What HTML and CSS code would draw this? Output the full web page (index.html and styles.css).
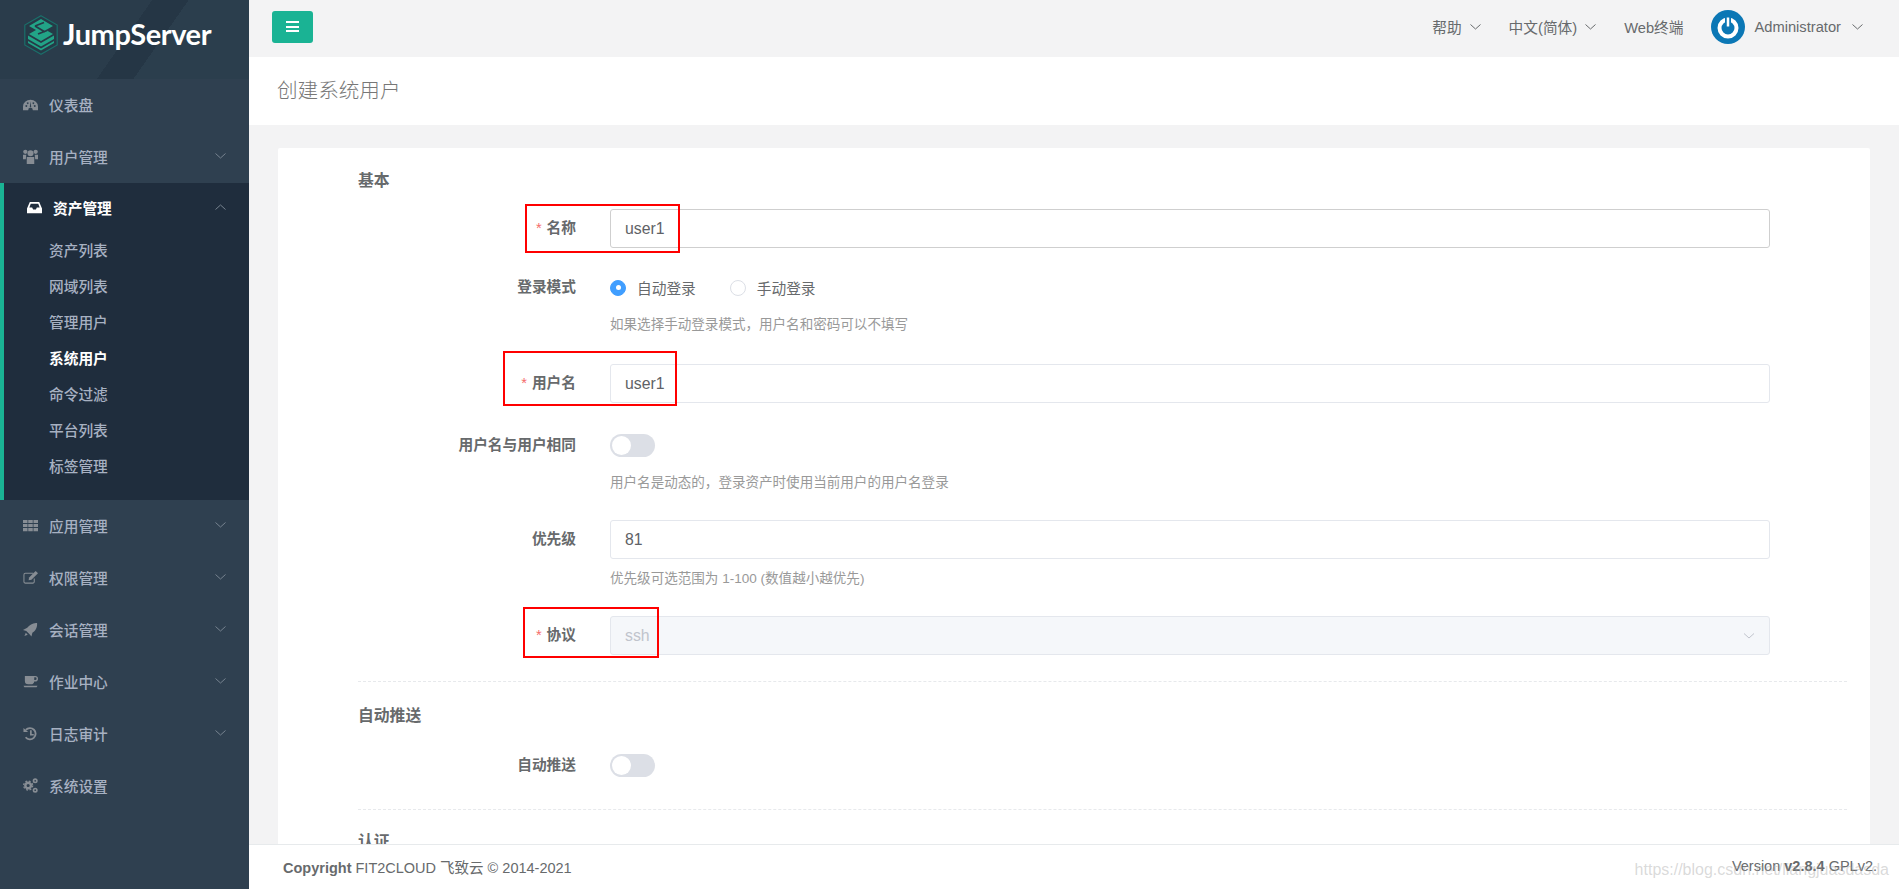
FILE: index.html
```html
<!DOCTYPE html>
<html lang="zh-CN">
<head>
  <meta charset="UTF-8">
  <title>创建系统用户</title>
  <link rel="stylesheet" href="styles.css">
</head>
<body>

  <!-- Sidebar -->
  <nav class="sidebar">
    <div class="logo-bar">
      <svg class="logo-mark" viewBox="0 0 34 40">
        <path d="M17 .8 33.200 10V30L17 39.200 .8 30V10Z" fill="#263a47" stroke="#1b6f6a" stroke-width="1.200"/>
        <path d="M17 4 29 11 22 15 29 19 17 26 5 19 12 15 5 11Z" fill="#22a487"/>
        <path d="M11 11 20 7.500M14 19 23 15.500M11 11 21 17" stroke="#263a47" stroke-width="1.800" fill="none"/>
        <path d="M4 20.500 17 28 30 20.500V24L17 31.500 4 24Z" fill="#22a487"/>
        <path d="M4 26 17 33.500 30 26V28L17 35.500 4 28Z" fill="#22a487"/>
      </svg>
      <span class="logo-text">JumpServer</span>
    </div>

    <ul class="menu">
      <li class="menu-item">
        <svg class="menu-icon" viewBox="0 0 16 16"><path d="M0 14V10A8 7 0 0 1 16 10V14H10.500A2.500 2.500 0 0 0 5.500 14ZM8 4.500 7.200 11H8.800ZM3.500 8.500A1 1 0 1 0 3.600 8.500ZM12.500 8.500A1 1 0 1 0 12.600 8.500ZM5 5.500A1 1 0 1 0 5.100 5.500ZM11 5.500A1 1 0 1 0 11.100 5.500Z" fill-rule="evenodd"/></svg>
        <span>仪表盘</span>
      </li>
      <li class="menu-item">
        <svg class="menu-icon" viewBox="0 0 16 16"><circle cx="2.500" cy="3" r="2.300"/><circle cx="13.500" cy="3" r="2.300"/><circle cx="8" cy="4.500" r="3.200"/><path d="M0 6H3.500L3 11H0ZM12.500 6H16V11H13ZM4 8.500H12V16H4Z"/></svg>
        <span>用户管理</span>
        <svg class="chevron" viewBox="0 0 11 6"><path d="M.5.500 5.500 5 10.500.5"/></svg>
      </li>

      <li class="menu-group">
        <div class="menu-item active-head">
          <svg class="menu-icon" viewBox="0 0 16 16"><path d="M3 2H13L16 9V14H0V9ZM4 4 2.500 8H5.500L6.500 10H9.500L10.500 8H13.500L12 4Z" fill-rule="evenodd"/></svg>
          <span>资产管理</span>
          <svg class="chevron" viewBox="0 0 11 6"><path d="M.5 5.500 5.500 1 10.500 5.500"/></svg>
        </div>
        <ul class="submenu">
          <li>资产列表</li>
          <li>网域列表</li>
          <li>管理用户</li>
          <li class="current">系统用户</li>
          <li>命令过滤</li>
          <li>平台列表</li>
          <li>标签管理</li>
        </ul>
      </li>

      <li class="menu-item">
        <svg class="menu-icon" viewBox="0 0 16 16"><path d="M0 2H4.800V5.300H0ZM5.600 2H10.400V5.300H5.600ZM11.200 2H16V5.300H11.200ZM0 6.300H4.800V9.600H0ZM5.600 6.300H10.400V9.600H5.600ZM11.200 6.300H16V9.600H11.200ZM0 10.600H4.800V14H0ZM5.600 10.600H10.400V14H5.600ZM11.200 10.600H16V14H11.200Z"/></svg>
        <span>应用管理</span>
        <svg class="chevron" viewBox="0 0 11 6"><path d="M.5.500 5.500 5 10.500.5"/></svg>
      </li>
      <li class="menu-item">
        <svg class="menu-icon" viewBox="0 0 16 16"><path d="M11 3.500H2.500A1.500 1.500 0 0 0 1 5V12.500A1.500 1.500 0 0 0 2.500 14H10.500A1.500 1.500 0 0 0 12 12.500V9" fill="none" stroke="currentColor" stroke-width="1.100"/><path d="M13.500 1 16 3.500 9 10.500 6 11 6.500 8Z"/></svg>
        <span>权限管理</span>
        <svg class="chevron" viewBox="0 0 11 6"><path d="M.5.500 5.500 5 10.500.5"/></svg>
      </li>
      <li class="menu-item">
        <svg class="menu-icon" viewBox="0 0 16 16"><path d="M15 1C15.500 6 13 9.500 10 11.500L9 15.500 7 13 3.500 9.500 0 8.500 4.500 6C7 3 10.500 .5 15 1ZM3 11.500 5 13.500 1.500 14.800Z"/></svg>
        <span>会话管理</span>
        <svg class="chevron" viewBox="0 0 11 6"><path d="M.5.500 5.500 5 10.500.5"/></svg>
      </li>
      <li class="menu-item">
        <svg class="menu-icon" viewBox="0 0 16 16"><path d="M2 2H13A3 3 0 0 1 13 8H12A3.500 3.500 0 0 1 8.500 11H5.500A3.500 3.500 0 0 1 2 7.500ZM12 3.500V6.500H13A1.500 1.500 0 0 0 13 3.500ZM.5 12.500H15.500L14.500 14H1.500Z" fill-rule="evenodd"/></svg>
        <span>作业中心</span>
        <svg class="chevron" viewBox="0 0 11 6"><path d="M.5.500 5.500 5 10.500.5"/></svg>
      </li>
      <li class="menu-item">
        <svg class="menu-icon" viewBox="0 0 16 16"><path d="M3 4.200A6 6 0 1 1 2.800 12" fill="none" stroke="currentColor" stroke-width="2"/><path d="M.5 2 5.500 6.500H.5ZM7.500 4.500H9.300V8.500H11.500V10H7.500Z"/></svg>
        <span>日志审计</span>
        <svg class="chevron" viewBox="0 0 11 6"><path d="M.5.500 5.500 5 10.500.5"/></svg>
      </li>
      <li class="menu-item">
        <svg class="menu-icon" viewBox="0 0 16 16"><circle cx="5.500" cy="8" r="3" fill="none" stroke="currentColor" stroke-width="2.600"/><circle cx="5.500" cy="8" r="4.800" fill="none" stroke="currentColor" stroke-width="1.400" stroke-dasharray="2 1.800"/><circle cx="13" cy="3" r="1.800" fill="none" stroke="currentColor" stroke-width="1.800"/><circle cx="13" cy="13" r="1.800" fill="none" stroke="currentColor" stroke-width="1.800"/></svg>
        <span>系统设置</span>
      </li>
    </ul>
  </nav>

  <div class="main">
    <!-- Top bar -->
    <header class="topbar">
      <button class="menu-toggle"><span></span><span></span><span></span></button>
      <div class="topnav">
        <a class="topnav-link">帮助<svg class="chevron" viewBox="0 0 11 6"><path d="M.5.500 5.500 5 10.500.5"/></svg></a>
        <a class="topnav-link">中文(简体)<svg class="chevron" viewBox="0 0 11 6"><path d="M.5.500 5.500 5 10.500.5"/></svg></a>
        <a class="topnav-link">Web终端</a>
        <a class="topnav-link user-link">
          <svg class="avatar" viewBox="0 0 34 34">
            <circle cx="17" cy="17" r="17" fill="#0b77b5"/>
            <circle cx="17" cy="18" r="8.500" fill="none" stroke="#fff" stroke-width="4"/>
            <path d="M17 7V17" stroke="#0b77b5" stroke-width="6"/>
            <path d="M17 7.500V16.500" stroke="#fff" stroke-width="2.500"/>
          </svg>
          <span class="user-name">Administrator</span>
          <svg class="chevron" viewBox="0 0 11 6"><path d="M.5.500 5.500 5 10.500.5"/></svg>
        </a>
      </div>
    </header>

    <div class="page-heading">创建系统用户</div>

    <!-- Form -->
    <div class="content">
      <form class="card">
        <h3 class="section-title">基本</h3>

        <div class="form-row row-name">
          <label class="form-label"><i>*</i>名称</label>
          <div class="form-control"><input class="text-input dark-border" value="user1"></div>
          <div class="mark mark-name"></div>
        </div>

        <div class="form-row row-login">
          <label class="form-label">登录模式</label>
          <div class="form-control radios">
            <span class="radio checked"></span><span class="radio-label">自动登录</span>
            <span class="radio"></span><span class="radio-label">手动登录</span>
          </div>
          <p class="help">如果选择手动登录模式，用户名和密码可以不填写</p>
        </div>

        <div class="form-row row-user">
          <label class="form-label"><i>*</i>用户名</label>
          <div class="form-control"><input class="text-input" value="user1"></div>
          <div class="mark mark-user"></div>
        </div>

        <div class="form-row row-same">
          <label class="form-label">用户名与用户相同</label>
          <div class="form-control"><span class="switch"></span></div>
          <p class="help">用户名是动态的，登录资产时使用当前用户的用户名登录</p>
        </div>

        <div class="form-row row-priority">
          <label class="form-label">优先级</label>
          <div class="form-control"><input class="text-input" value="81"></div>
          <p class="help help-priority">优先级可选范围为 1-100 (数值越小越优先)</p>
        </div>

        <div class="form-row row-protocol">
          <label class="form-label"><i>*</i>协议</label>
          <div class="form-control">
            <div class="select-box">ssh<svg class="chevron" viewBox="0 0 11 6"><path d="M.5.500 5.500 5 10.500.5"/></svg></div>
          </div>
          <div class="mark mark-protocol"></div>
        </div>

        <hr class="divider">
        <h3 class="section-title">自动推送</h3>

        <div class="form-row row-push">
          <label class="form-label">自动推送</label>
          <div class="form-control"><span class="switch"></span></div>
        </div>

        <hr class="divider">
        <h3 class="section-title">认证</h3>
      </form>
    </div>

    <footer class="footer">
      <div><strong>Copyright</strong> FIT2CLOUD 飞致云 © 2014-2021</div>
      <div>Version <strong>v2.8.4</strong> GPLv2.</div>
      <div class="watermark">https://blog.csdn.net/liangjuasdasda</div>
    </footer>
  </div>

</body>
</html>
```

FILE: styles.css
```css
* {
  margin: 0;
  padding: 0;
  box-sizing: border-box;
}

html, body {
  height: 100%;
  overflow: hidden;
}

body {
  display: flex;
  font-family: "Liberation Sans", "Noto Sans CJK SC", sans-serif;
  font-size: 14.7px;
  color: #676a6c;
  background: #f3f3f4;
}

ul {
  list-style: none;
}

.chevron {
  width: 11px;
  height: 6px;
  fill: none;
  stroke: currentColor;
  stroke-width: 1;
  flex: none;
}

/* Sidebar */
.sidebar {
  width: 249px;
  flex: none;
  background: #2f4050;
  color: #a7b1c2;
  font-weight: 500;
}

.logo-bar {
  height: 79px;
  display: flex;
  align-items: center;
  gap: 5px;
  padding: 0 0 10px 24px;
  background: linear-gradient(125deg, #2a3c4b 0%, #2a3c4b 50%, #253645 50%, #253645 62%, #2b3e4d 62%);
}

.logo-mark {
  width: 34px;
  height: 40px;
  flex: none;
}

.logo-text {
  font-family: Lato, sans-serif;
  font-size: 29px;
  font-weight: 700;
  letter-spacing: -0.4px;
  color: #fff;
  margin-top: -2px;
}

.menu-item {
  height: 52px;
  display: flex;
  align-items: center;
  padding: 0 23px 2px;
}

.menu-item span {
  flex: 1;
  margin-left: 11px;
}

.menu-icon {
  width: 15px;
  height: 15px;
  flex: none;
  fill: currentColor;
  color: #878d94;
}

.menu-item .chevron {
  color: #77838f;
}

.menu-group {
  height: 317px;
  background: #1f2d3d;
  border-left: 4px solid #1ab394;
}

.active-head {
  color: #fff;
  font-weight: 700;
  height: 50px;
}

.active-head .menu-icon {
  color: #fff;
}

.submenu li {
  height: 36px;
  line-height: 36px;
  padding-left: 45px;
}

.submenu .current {
  color: #fff;
  font-weight: 700;
}

/* Top bar */
.main {
  flex: 1;
  min-width: 0;
  display: flex;
  flex-direction: column;
}

.topbar {
  height: 57px;
  flex: none;
  display: flex;
  align-items: center;
  justify-content: space-between;
  padding: 0 36px 4px 23px;
}

.menu-toggle {
  width: 41px;
  height: 32px;
  background: #1ab394;
  border: none;
  border-radius: 3px;
  display: flex;
  flex-direction: column;
  align-items: center;
  justify-content: center;
  gap: 2.500px;
}

.menu-toggle span {
  width: 13px;
  height: 2px;
  background: #fff;
}

.topnav {
  display: flex;
  align-items: center;
}

.topnav-link {
  display: flex;
  align-items: center;
  gap: 8px;
  margin-left: 28px;
}

.user-link {
  gap: 9px;
  margin-left: 28px;
}

.user-name {
  margin-right: 2px;
}

.avatar {
  width: 34px;
  height: 34px;
}

/* Page heading */
.page-heading {
  height: 68px;
  flex: none;
  display: flex;
  align-items: center;
  padding: 0 0 4px 28px;
  background: #fff;
  font-size: 20.6px;
  font-weight: 300;
  color: #777;
}

/* Form */
.content {
  flex: 1;
  min-height: 0;
  overflow: hidden;
  padding: 23px 29px 0;
}

.card {
  background: #fff;
  padding: 21px 23px 0 80px;
  min-height: 100%;
  border-radius: 2px;
}

.section-title {
  font-size: 15.8px;
  line-height: 24px;
  font-weight: 700;
  color: #676a6c;
}

.form-row {
  position: relative;
  display: grid;
  grid-template-columns: 218px 1160px;
  column-gap: 34px;
  align-items: center;
}

.form-label {
  text-align: right;
  font-weight: 700;
  font-size: 14.7px;
  padding-bottom: 5px;
}

.form-label i {
  color: #f56c6c;
  font-style: normal;
  font-weight: 400;
  margin-right: 5px;
}

.form-control {
  min-height: 39px;
  display: flex;
  align-items: center;
}

.text-input {
  width: 100%;
  height: 39px;
  border: 1px solid #e4e7ed;
  border-radius: 3px;
  padding: 0 14px;
  font: inherit;
  font-size: 15.8px;
  color: #606266;
  background: #fff;
}

.dark-border {
  border-color: #cfcfcf;
}

.help {
  grid-column: 2;
  margin-top: 8px;
  line-height: 20px;
  font-size: 13.56px;
  color: #999;
}

.help-priority {
  margin-top: 10px;
}

.radio {
  width: 16px;
  height: 16px;
  flex: none;
  border: 1px solid #dcdfe6;
  border-radius: 50%;
  background: #fff;
  display: flex;
  align-items: center;
  justify-content: center;
}

.radio.checked {
  background: #409eff;
  border-color: #409eff;
}

.radio.checked::after {
  content: "";
  width: 5px;
  height: 5px;
  border-radius: 50%;
  background: #fff;
}

.radio-label {
  font-size: 14.7px;
  margin-left: 11px;
  margin-right: 34px;
}

.switch {
  width: 45px;
  height: 23px;
  border-radius: 12px;
  background: #dcdfe6;
  display: flex;
  align-items: center;
  padding-left: 2px;
}

.switch::after {
  content: "";
  width: 19px;
  height: 19px;
  border-radius: 50%;
  background: #fff;
}

.select-box {
  width: 100%;
  height: 39px;
  border: 1px solid #e4e7ed;
  border-radius: 3px;
  background: #f5f7fa;
  color: #c0c4cc;
  font-size: 15.8px;
  padding: 0 14px;
  display: flex;
  align-items: center;
  justify-content: space-between;
}

.select-box .chevron {
  width: 12px;
  color: #c0c4cc;
}

.divider {
  border: none;
  border-top: 1px dashed #e7e9ec;
}

/* Vertical spacing of the form rows */
.row-name { margin-top: 16px; }
.row-login { margin-top: 20px; }
.row-user { margin-top: 29px; }
.row-same { margin-top: 23px; }
.row-priority { margin-top: 27px; }
.row-protocol { margin-top: 27px; }
.card > .divider { margin-top: 26px; }
.divider + .section-title { margin-top: 22px; }
.row-push { margin-top: 18px; }
.row-push + .divider { margin-top: 24px; }
.row-push + .divider + .section-title { margin-top: 20px; }

/* Red annotation boxes */
.mark {
  position: absolute;
  border: 2px solid #f00;
  pointer-events: none;
}

.mark-name {
  top: -5px;
  left: 167px;
  width: 155px;
  height: 49px;
}

.mark-user {
  top: -13px;
  left: 145px;
  width: 174px;
  height: 55px;
}

.mark-protocol {
  top: -9px;
  left: 165px;
  width: 136px;
  height: 51px;
}

/* Footer */
.footer {
  position: relative;
  height: 45px;
  flex: none;
  display: flex;
  align-items: center;
  justify-content: space-between;
  padding: 0 22px 2px 34px;
  background: #fff;
  border-top: 1px solid #e7eaec;
  font-size: 14.5px;
}

.watermark {
  position: absolute;
  right: 10px;
  top: 16px;
  font-size: 16px;
  color: rgba(160, 160, 160, 0.4);
  white-space: nowrap;
}
```
